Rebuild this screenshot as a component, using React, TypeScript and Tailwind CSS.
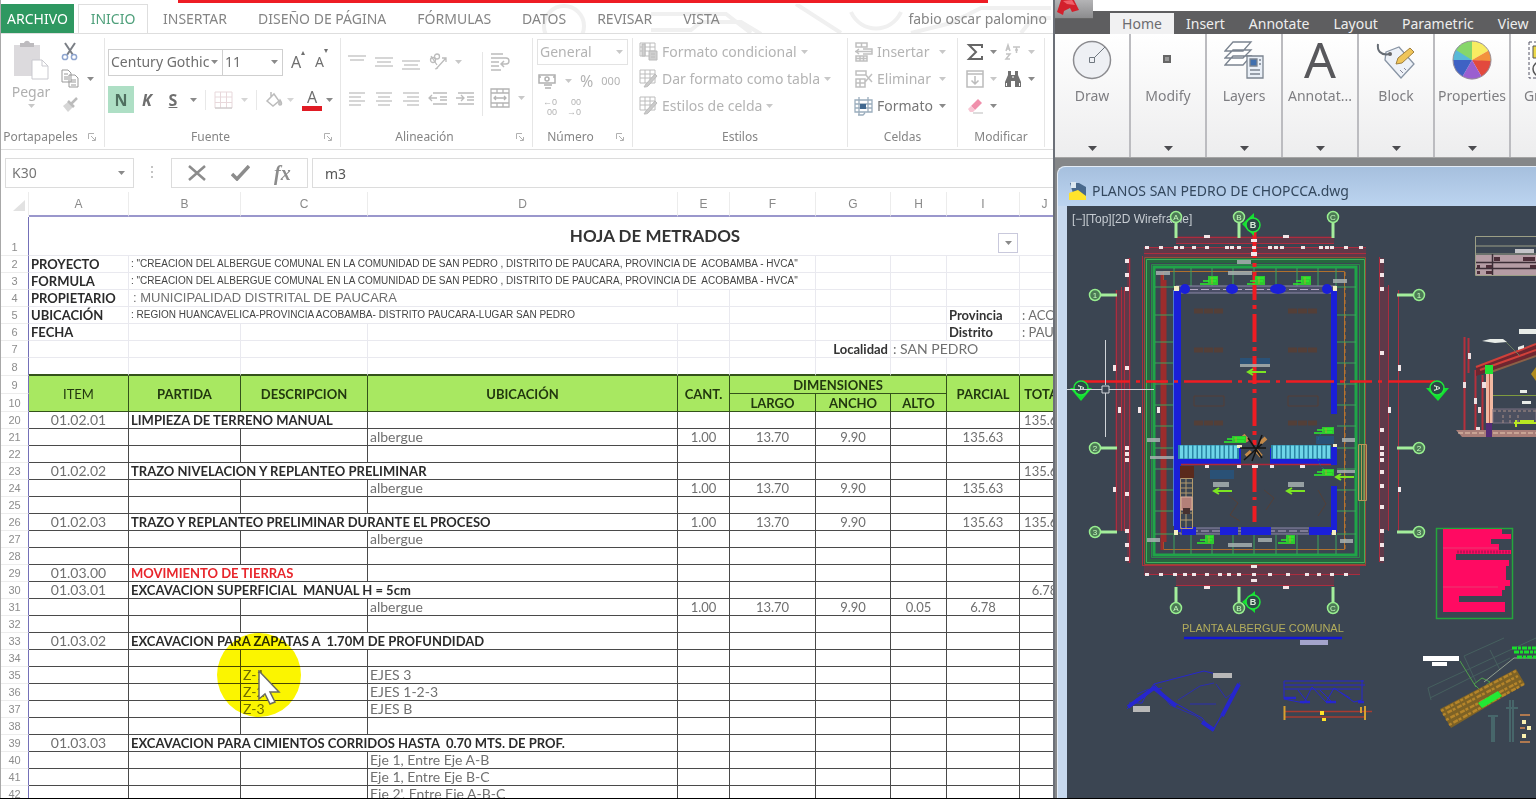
import type { ReactNode } from "react";

const TABS = ["INSERTAR", "DISEÑO DE PÁGINA", "FÓRMULAS", "DATOS", "REVISAR", "VISTA"];

const COLUMNS = ["A", "B", "C", "D", "E", "F", "G", "H", "I", "J", "K"];

type Row = {
  n: number;
  item?: string;
  title?: string;
  span?: number;
  red?: boolean;
  desc?: string;
  place?: string;
  nums?: string[];
  total?: string;
};

const ROWS: Row[] = [
  { n: 20, item: "01.02.01", title: "LIMPIEZA DE TERRENO MANUAL", span: 2, total: "135.63" },
  { n: 21, place: "albergue", nums: ["1.00", "13.70", "9.90", "", "135.63"] },
  { n: 22 },
  { n: 23, item: "01.02.02", title: "TRAZO NIVELACION Y REPLANTEO PRELIMINAR", span: 3, total: "135.63" },
  { n: 24, place: "albergue", nums: ["1.00", "13.70", "9.90", "", "135.63"] },
  { n: 25 },
  {
    n: 26,
    item: "01.02.03",
    title: "TRAZO Y REPLANTEO PRELIMINAR DURANTE EL PROCESO",
    span: 3,
    nums: ["1.00", "13.70", "9.90", "", "135.63"],
    total: "135.63",
  },
  { n: 27, place: "albergue" },
  { n: 28 },
  { n: 29, item: "01.03.00", title: "MOVIMIENTO DE TIERRAS", span: 2, red: true },
  { n: 30, item: "01.03.01", title: "EXCAVACION SUPERFICIAL\u00a0 MANUAL H = 5cm", span: 3, total: "6.78" },
  { n: 31, place: "albergue", nums: ["1.00", "13.70", "9.90", "0.05", "6.78"] },
  { n: 32 },
  { n: 33, item: "01.03.02", title: "EXCAVACION PARA ZAPATAS A\u00a0 1.70M DE PROFUNDIDAD", span: 3 },
  { n: 34 },
  { n: 35, desc: "Z-1", place: "EJES 3" },
  { n: 36, desc: "Z-2", place: "EJES 1-2-3" },
  { n: 37, desc: "Z-3", place: "EJES B" },
  { n: 38 },
  { n: 39, item: "01.03.03", title: "EXCAVACION PARA CIMIENTOS CORRIDOS HASTA\u00a0 0.70 MTS. DE PROF.", span: 3 },
  { n: 40, place: "Eje 1, Entre Eje A-B" },
  { n: 41, place: "Eje 1, Entre Eje B-C" },
  { n: 42, place: "Eje 2', Entre Eje A-B-C" },
];

function Caret({ className = "text-[#8a8a8a]" }: { className?: string }) {
  return (
    <svg width="7" height="4" viewBox="0 0 7 4" className={`shrink-0 ${className}`} aria-hidden="true">
      <path d="M0 0h7L3.500 4z" fill="currentColor" />
    </svg>
  );
}

function Group({
  label,
  className,
  launcher = false,
  children,
}: {
  label: string;
  className: string;
  launcher?: boolean;
  children: ReactNode;
}) {
  return (
    <section className={`flex shrink-0 flex-col border-r border-[#e6e6e6] ${className}`}>
      <div className="min-h-0 flex-1">{children}</div>
      <div className="relative h-5 text-center text-xs leading-5 text-[#858585]">
        {label}
        {launcher && (
          <svg className="absolute right-2 top-1.5" width="8" height="8" viewBox="0 0 8 8" fill="none" stroke="#b0b0b0">
            <path d="M.5 6V.5H6M3 3l4 4M7.500 4v3.500H4" />
          </svg>
        )}
      </div>
    </section>
  );
}

function Lines({ rows, stroke = "#c0c0c0" }: { rows: [number, number, number][]; stroke?: string }) {
  return (
    <svg width="20" height="20" viewBox="0 0 20 20" stroke={stroke} strokeWidth="1.300">
      {rows.map(([y, a, b]) => (
        <path key={y} d={`M${a} ${y}H${b}`} />
      ))}
    </svg>
  );
}

function Ribbon() {
  return (
    <div className="flex h-[116px] overflow-hidden border-b border-[#dedede] pb-0.5 pt-1">
      <Group label="Portapapeles" launcher className="w-[104px] [&>div:last-child]:pr-6">
        <div className="flex h-full gap-2 pl-2.5">
          <button className="flex w-10 flex-col items-center text-sm text-[#b0b0b0]">
            <svg width="36" height="42" viewBox="0 0 36 42" fill="none">
              <path d="M1 7h26v31H1z" fill="#dcdadd" />
              <path d="M7 9V5h4c1-3 5-3 6 0h4v4z" fill="#bdbbbe" />
              <path d="M19 22h10l6 6v13H19z" fill="#fff" stroke="#c9c9cf" />
              <path d="M29 22v6h6" stroke="#c9c9cf" />
            </svg>
            <span className="leading-6">Pegar</span>
            <Caret className="text-[#c8c8c8]" />
          </button>
          <div className="flex flex-col gap-2 pt-1">
            <button aria-label="Cortar" className="pl-0.5">
              <svg width="18" height="19" viewBox="0 0 18 19" fill="none">
                <path d="M4 1l8 12M14 1L6 13" stroke="#7b7f86" strokeWidth="2" />
                <circle cx="4" cy="15" r="2.600" stroke="#8fa5cf" strokeWidth="1.500" />
                <circle cx="13" cy="15" r="2.600" stroke="#8fa5cf" strokeWidth="1.500" />
              </svg>
            </button>
            <button aria-label="Copiar" className="flex items-center gap-2 pl-0.5">
              <svg width="18" height="19" viewBox="0 0 18 19" fill="#fff" stroke="#999">
                <path d="M1 1h6l3 3v9H1zM8 6h6l3 3v9H8z" />
                <path d="M3 5h4M3 8h4M3 10h4M10 11h5M10 13h5M10 16h5" />
              </svg>
              <Caret />
            </button>
            <button aria-label="Copiar formato" className="pl-0.5">
              <svg width="18" height="17" viewBox="0 0 18 17">
                <path d="M2 10l6-5 5 5-6 6z" fill="#d6d6d6" />
                <path d="M7 5l6 6M10 8l6-6" stroke="#bbb" strokeWidth="2.500" />
              </svg>
            </button>
          </div>
        </div>
      </Group>

      <Group label="Fuente" launcher className="w-[236px] [&>div:last-child]:pr-6">
        <div className="flex flex-col gap-2.5 pl-[3px] pt-2.5 text-[#6f6f6f]">
          <div className="flex items-center">
            <div className="relative flex h-[27px] w-[115px] items-center border border-[#cfcfcf]">
              <select aria-label="Fuente" className="w-full appearance-none pl-0.5 text-sm outline-none">
                <option>Century Gothic</option>
              </select>
              <Caret className="absolute right-1 text-[#8a8a8a]" />
            </div>
            <div className="relative flex h-[27px] w-[60px] items-center border border-l-0 border-[#cfcfcf]">
              <select aria-label="Tamaño" className="w-full appearance-none pl-0.5 text-sm outline-none">
                <option>11</option>
              </select>
              <Caret className="absolute right-1 text-[#8a8a8a]" />
            </div>
            <button className="ml-2 flex w-6 text-base">
              A<sup className="text-[8px] leading-3">▴</sup>
            </button>
            <button className="flex w-6 text-sm leading-7">
              A<sup className="text-[8px] leading-3">▾</sup>
            </button>
          </div>
          <div className="flex h-[27px] items-center">
            <button className="h-[27px] w-[26px] bg-[#aedfc5] text-base font-bold text-[#4f6f5f]">N</button>
            <button className="w-[26px] text-base font-bold italic">K</button>
            <button className="w-[26px] text-base font-bold underline">S</button>
            <Caret className="ml-1 text-[#8a8a8a]" />
            <span className="mx-2 h-5 w-px bg-[#e8e8e8]" />
            <svg width="19" height="18" viewBox="0 0 19 18" fill="none" stroke="#e8d8db">
              <path d="M1 1h17v16H1zM6.500 1v16M12.500 1v16M1 6h17M1 11.500h17" />
              <path d="M1 17h17" stroke="#c4c4c4" />
            </svg>
            <Caret className="ml-2 text-[#d5d5d5]" />
            <span className="mx-2 h-5 w-px bg-[#e8e8e8]" />
            <svg width="18" height="18" viewBox="0 0 18 18" fill="none" stroke="#bcbcbc" strokeWidth="1.500">
              <path d="M2 10l7-7 5 7-6 5zM6 6V1" />
              <path d="M15 9c2 3 2 5 0 5s-1-3 0-5z" fill="#ccc" />
            </svg>
            <Caret className="ml-1 text-[#d5d5d5]" />
            <button aria-label="Color de fuente" className="ml-2 flex w-5 flex-col items-center leading-none">
              <span className="text-base leading-[17px]">A</span>
              <span className="h-[5px] w-5 bg-[#e01b24]" />
            </button>
            <Caret className="ml-1 text-[#8a8a8a]" />
          </div>
        </div>
      </Group>

      <Group label="Alineación" launcher className="w-[192px] [&>div:last-child]:pr-6">
        <div className="flex h-full pl-1.5 pt-3.5">
          <div className="flex h-[64px] w-[136px] flex-col gap-4 border-r border-[#e6e6e6]">
            <div className="flex items-center gap-[7px]">
              <Lines rows={[[4, 1, 19], [8, 3, 17]]} />
              <Lines rows={[[6, 1, 19], [10, 3, 17], [14, 1, 19]]} />
              <Lines rows={[[9, 1, 19], [13, 3, 17], [17, 1, 19]]} />
              <svg width="20" height="20" viewBox="0 0 20 20" fill="none" stroke="#bcbcbc" strokeWidth="1.300">
                <circle cx="5" cy="8" r="2.500" />
                <circle cx="9" cy="4.500" r="2.500" />
                <path d="M3 4l6 9M8 17L18 6M18 10V6h-4M7 17l3-1" />
              </svg>
              <Caret className="text-[#c8c8c8]" />
            </div>
            <div className="flex items-center gap-[7px]">
              <Lines rows={[[5, 2, 18], [9, 2, 14], [13, 2, 18], [17, 2, 14]]} />
              <Lines rows={[[5, 2, 18], [9, 4, 16], [13, 2, 18], [17, 4, 16]]} />
              <Lines rows={[[5, 2, 18], [9, 6, 18], [13, 2, 18], [17, 6, 18]]} />
              <svg width="20" height="20" viewBox="0 0 20 20" fill="none" stroke="#bcbcbc" strokeWidth="1.300">
                <path d="M1 10h8M4 7l-3 3 3 3M5 5h14M12 9h7M12 12h7M5 16h14" />
              </svg>
              <svg width="20" height="20" viewBox="0 0 20 20" fill="none" stroke="#bcbcbc" strokeWidth="1.300">
                <path d="M1 10h8M6 7l3 3-3 3M3 5h16M12 9h7M12 12h7M3 16h16" />
              </svg>
            </div>
          </div>
          <div className="flex flex-col gap-4 pl-[7px]">
            <svg width="20" height="20" viewBox="0 0 20 20" fill="none" stroke="#bcbcbc" strokeWidth="1.500">
              <path d="M1 2h12M1 6h15c4 0 4 6 0 6h-4M14 9l-3 3 3 3M1 10h8M1 14h8M1 18h10" />
            </svg>
            <div className="flex items-center gap-2">
              <svg width="20" height="20" viewBox="0 0 20 20" fill="none" stroke="#b4b4b4" strokeWidth="1.300">
                <path d="M1 1h18v18H1zM1 5h18M1 15h18M7 1v4M13 1v4M7 15v4M13 15v4M4 10h12M6 8l-2 2 2 2M14 8l2 2-2 2" />
              </svg>
              <Caret className="text-[#c8c8c8]" />
            </div>
          </div>
        </div>
      </Group>

      <Group label="Número" launcher className="w-[100px] [&>div:last-child]:pr-6">
        <div className="flex flex-col gap-1 pl-1 pt-px text-[#b4b4b4]">
          <div className="relative flex h-[26px] w-[91px] items-center border border-[#e3e3e3]">
            <select aria-label="Formato de número" className="w-full appearance-none pl-0.5 text-sm outline-none">
              <option>General</option>
            </select>
            <Caret className="absolute right-1 text-[#c8c8c8]" />
          </div>
          <div className="flex h-6 items-center gap-2">
            <svg width="20" height="17" viewBox="0 0 20 17" fill="none" stroke="#b0b0b0" strokeWidth="1.500">
              <path d="M2 2h16v8H2zM2 4h2M16 4h2M7 12h8M8 15h6" />
              <circle cx="10" cy="6" r="2" />
            </svg>
            <Caret className="text-[#c8c8c8]" />
            <span className="text-base leading-6">%</span>
            <span className="text-[11px]">000</span>
          </div>
          <div className="flex gap-2 pl-1 font-['Liberation_Sans'] text-[9px] leading-[10px]">
            <span className="w-4 text-right">←0<br />00</span>
            <span className="w-4 text-right">00<br />→0</span>
          </div>
        </div>
      </Group>

      <Group label="Estilos" className="w-[215px]">
        <div className="flex flex-col pl-1.5 text-sm text-[#b4b4b4]">
          {["Formato condicional", "Dar formato como tabla", "Estilos de celda"].map((t, i) => (
            <button key={t} className="flex h-[27px] items-center gap-1">
              <svg width="19" height="19" viewBox="0 0 19 19" fill="none" stroke="#bcbcbc">
                <path d="M1 1h15v13H1zM1 5h15M1 9h15M6 1v13M11 1v13" />
                {i === 0 ? (
                  <path d="M3 2h3v12H3zM10 9h8v9h-8zM12 12h4M12 15h4" fill="#cfcfcf" />
                ) : (
                  <path d="M7 15l9-10 2 2-8 9c-1 2-4 2-5 2z" fill="#cacaca" />
                )}
              </svg>
              {t}
              <Caret className="text-[#c8c8c8]" />
            </button>
          ))}
        </div>
      </Group>

      <Group label="Celdas" className="w-[110px]">
        <div className="flex flex-col pl-1.5 text-sm text-[#b4b4b4]">
          <button className="flex h-[27px] items-center gap-1">
            <svg width="19" height="20" viewBox="0 0 19 20" fill="none" stroke="#c0c0c0" strokeWidth="1.500">
              <path d="M2 1h11v4H2zM7.500 1v4M2 14h11v5H2zM6 14v5M9.500 14v5M2 16.500h11M1 9.500h17M5 7L2 9.500 5 12M9 7h9v5H9" />
            </svg>
            <span className="w-[58px] text-left">Insertar</span>
            <Caret className="text-[#c8c8c8]" />
          </button>
          <button className="flex h-[27px] items-center gap-1">
            <svg width="19" height="20" viewBox="0 0 19 20" fill="none" stroke="#c0c0c0" strokeWidth="1.500">
              <path d="M2 2h10v4H2zM2 10h9v8H2zM6 10v8M2 14h9M11 5l7 8M18 5l-7 8" />
            </svg>
            <span className="w-[58px] text-left">Eliminar</span>
            <Caret className="text-[#c8c8c8]" />
          </button>
          <button className="flex h-[27px] items-center gap-1 text-[#777]">
            <svg width="19" height="20" viewBox="0 0 19 20" fill="none" stroke="#9badbd" strokeWidth="1.300">
              <path d="M1 4h17v12H1zM5 1v18M14 1v15M1 8h17M1 12h17M4 19h5l2-2" />
              <path d="M6 8h6v5H6z" fill="#41688f" stroke="none" />
            </svg>
            <span className="w-[58px] text-left">Formato</span>
            <Caret />
          </button>
        </div>
      </Group>

      <Group label="Modificar" className="w-[87px]">
        <div className="grid grid-cols-[38px_40px] pl-2 [&>button]:flex [&>button]:h-[27px] [&>button]:items-center [&>button]:gap-1.5">
          <button aria-label="Autosuma">
            <svg width="18" height="18" viewBox="0 0 18 18" fill="none" stroke="#666" strokeWidth="2">
              <path d="M16 5V2H3l7 7-7 7h13v-3" />
            </svg>
            <Caret />
          </button>
          <button aria-label="Ordenar y filtrar">
            <svg width="18" height="18" viewBox="0 0 18 18" fill="none" stroke="#c4c4c4" strokeWidth="1.500">
              <path d="M2 8l2-6 2 6M3 6h3M2 11h4l-4 5h4M9 4h7M11 7h3M12.500 4v6" />
            </svg>
            <Caret className="text-[#c8c8c8]" />
          </button>
          <button aria-label="Rellenar">
            <svg width="18" height="18" viewBox="0 0 18 18" fill="none" stroke="#bcbcbc" strokeWidth="1.500">
              <path d="M1 1h16v16H1zM1 4h16M9 6v8M5.500 10.500L9 14l3.500-3.500" />
            </svg>
            <Caret className="text-[#c8c8c8]" />
          </button>
          <button aria-label="Buscar">
            <svg width="18" height="18" viewBox="0 0 18 18" fill="#707070">
              <path d="M4 1h3v4h4V1h3v4l3 7v5h-6v-6H7v6H1v-5l3-7z" />
              <path d="M2.500 13v3M15.500 13v3M9 6v2" stroke="#fff" />
            </svg>
            <Caret />
          </button>
          <button aria-label="Borrar">
            <svg width="18" height="18" viewBox="0 0 18 18">
              <path d="M5 9l7-7 4 4-7 7z" fill="#f08fab" />
              <path d="M5 9l4 4-2 2H4l-2-3z" fill="#f8c6d4" />
              <path d="M7 16h10" stroke="#bbb" />
            </svg>
            <Caret />
          </button>
        </div>
      </Group>
    </div>
  );
}

const soft = "border-b border-r border-[#e9e9ef]";
const cell = "border-b border-r border-[#4a4a4a]";
const head = "border-b border-r border-[#33521a] bg-[#a8e861] font-bold text-[#22380f]";

function Blank({ count }: { count: number }) {
  return (
    <>
      {Array.from({ length: count }, (_, i) => (
        <td key={i} className={soft} />
      ))}
    </>
  );
}

function RowNo({ n, className = "" }: { n: number; className?: string }) {
  return (
    <th
      scope="row"
      className={`border-b border-r border-b-[#ececec] border-r-[#7470b8] text-center font-['Liberation_Sans'] text-[11px] font-normal text-[#8d8d8d] ${className}`}
    >
      {n}
    </th>
  );
}

function Sheet() {
  return (
    <div className="relative min-h-0 flex-1 overflow-hidden">
      <table className="w-[1280px] table-fixed border-separate border-spacing-0 whitespace-nowrap font-['Lato',sans-serif] text-[13px] leading-4 text-[#707070] [&_td]:p-0 [&_th]:p-0">
        <colgroup>
          <col className="w-[28px]" />
          <col className="w-[100px]" />
          <col className="w-[112px]" />
          <col className="w-[127px]" />
          <col className="w-[310px]" />
          <col className="w-[52px]" />
          <col className="w-[86px]" />
          <col className="w-[75px]" />
          <col className="w-[56px]" />
          <col className="w-[73px]" />
          <col className="w-[50px]" />
          <col className="w-[211px]" />
        </colgroup>
        <thead>
          <tr className="h-[25px] font-['Liberation_Sans'] text-xs text-[#8a8a8a] [&>th]:border-b-2 [&>th]:border-r [&>th]:border-b-[#9a97cc] [&>th]:border-r-[#ececec]">
            <th className="border-b-transparent! align-bottom">
              <svg className="mb-1 ml-3" width="12" height="11" viewBox="0 0 12 11">
                <path d="M12 0v11H0z" fill="#e2e2e2" />
              </svg>
            </th>
            {COLUMNS.map((c) => (
              <th key={c} scope="col" className="font-normal">
                {c}
              </th>
            ))}
          </tr>
        </thead>
        <tbody>
          <tr className="h-[39px]">
            <RowNo n={1} className="align-bottom" />
            <td colSpan={11} className="relative border-b border-[#e9e9ef] text-center text-[17px] font-bold text-[#333]">
              HOJA DE METRADOS
              <button
                aria-label="Filtrar"
                className="absolute left-[969px] top-4 flex size-5 items-center justify-center border border-[#c9c9dc] bg-white"
              >
                <Caret />
              </button>
            </td>
          </tr>
          {[
            { n: 2, k: "PROYECTO" },
            { n: 3, k: "FORMULA" },
          ].map(({ n, k }) => (
            <tr key={n} className="h-[17px]">
              <RowNo n={n} />
              <td className={`${soft} font-bold text-[#2b2b2b]`}>
                <span className="pl-0.5">{k}</span>
              </td>
              <td colSpan={5} className={`${soft} font-['Liberation_Sans'] text-[10px] text-[#444]`}>
                <span className="pl-0.5">
                  : "CREACION DEL ALBERGUE COMUNAL EN LA COMUNIDAD DE SAN PEDRO , DISTRITO DE PAUCARA, PROVINCIA DE&nbsp;
                  ACOBAMBA - HVCA"
                </span>
              </td>
              <Blank count={5} />
            </tr>
          ))}
          <tr className="h-[17px]">
            <RowNo n={4} />
            <td className={`${soft} font-bold text-[#2b2b2b]`}>
              <span className="pl-0.5">PROPIETARIO</span>
            </td>
            <td colSpan={3} className={`${soft} font-['Liberation_Sans']`}>
              <span className="pl-1">: MUNICIPALIDAD DISTRITAL DE PAUCARA</span>
            </td>
            <Blank count={7} />
          </tr>
          <tr className="h-[17px]">
            <RowNo n={5} />
            <td className={`${soft} font-bold text-[#2b2b2b]`}>
              <span className="pl-0.5">UBICACIÓN</span>
            </td>
            <td colSpan={4} className={`${soft} font-['Liberation_Sans'] text-[10px] text-[#444]`}>
              <span className="pl-0.5">: REGION HUANCAVELICA-PROVINCIA ACOBAMBA- DISTRITO PAUCARA-LUGAR SAN PEDRO</span>
            </td>
            <Blank count={3} />
            <td className={`${soft} font-bold text-[#333]`}>
              <span className="pl-0.5">Provincia</span>
            </td>
            <td colSpan={2} className="border-b border-[#e9e9ef]">
              <span className="pl-0.5">: ACOBAMBA</span>
            </td>
          </tr>
          <tr className="h-[17px]">
            <RowNo n={6} />
            <td className={`${soft} font-bold text-[#2b2b2b]`}>
              <span className="pl-0.5">FECHA</span>
            </td>
            <Blank count={7} />
            <td className={`${soft} font-bold text-[#333]`}>
              <span className="pl-0.5">Distrito</span>
            </td>
            <td colSpan={2} className="border-b border-[#e9e9ef]">
              <span className="pl-0.5">: PAUCARA</span>
            </td>
          </tr>
          <tr className="h-[17px]">
            <RowNo n={7} />
            <Blank count={6} />
            <td className={`${soft} text-right font-bold text-[#333]`}>
              <span className="pr-0.5">Localidad</span>
            </td>
            <td colSpan={2} className={`${soft} text-sm leading-4`}>
              <span className="pl-0.5">: SAN PEDRO</span>
            </td>
            <Blank count={2} />
          </tr>
          <tr className="h-[18px] [&>td]:border-b-2 [&>td]:border-b-[#33521a]">
            <RowNo n={8} />
            <Blank count={11} />
          </tr>
          <tr className="h-[18px]">
            <RowNo n={9} />
            <td rowSpan={2} className={`${head} text-center font-normal!`}>ITEM</td>
            <th rowSpan={2} className={head}>PARTIDA</th>
            <th rowSpan={2} className={head}>DESCRIPCION</th>
            <th rowSpan={2} className={head}>UBICACIÓN</th>
            <th rowSpan={2} className={head}>CANT.</th>
            <th colSpan={3} className={head}>DIMENSIONES</th>
            <th rowSpan={2} className={head}>PARCIAL</th>
            <th rowSpan={2} className={head}>TOTAL</th>
            <th rowSpan={2} className={head} />
          </tr>
          <tr className="h-[18px]">
            <RowNo n={10} />
            <th className={head}>LARGO</th>
            <th className={head}>ANCHO</th>
            <th className={head}>ALTO</th>
          </tr>
          {ROWS.map((r) => (
            <tr key={r.n} className="h-[17px]">
              <RowNo n={r.n} />
              <td className={`${cell} text-center text-sm leading-4`}>{r.item}</td>
              {r.title ? (
                <td
                  colSpan={r.span}
                  className={`${cell} font-bold ${r.red ? "text-[#e8262c]" : "text-[#2b2b2b]"}`}
                >
                  <span className="pl-0.5">{r.title}</span>
                </td>
              ) : (
                <>
                  <td className={cell} />
                  <td className={`${cell} text-sm leading-4`}>
                    <span className="pl-0.5">{r.desc}</span>
                  </td>
                </>
              )}
              {r.span !== 3 && (
                <td className={`${cell} text-sm leading-4`}>
                  <span className="pl-0.5">{r.place}</span>
                </td>
              )}
              {[0, 1, 2, 3, 4].map((i) => (
                <td key={i} className={`${cell} text-center`}>
                  {r.nums?.[i]}
                </td>
              ))}
              <td className={`${cell} text-center`}>{r.total}</td>
              <td className={cell} />
            </tr>
          ))}
        </tbody>
      </table>
      {/* click highlight and pointer */}
      <div className="absolute left-[216px] top-[441px] size-[84px] rounded-full bg-[#fbf500] mix-blend-multiply" />
      <svg className="absolute left-[257px] top-[478px]" width="24" height="36" viewBox="0 0 24 36">
        <path d="M1 1v28l6-5 5 10 5-2-5-10h9z" fill="#fff" stroke="#6b6b60" strokeWidth="1.500" />
      </svg>
    </div>
  );
}

function Excel() {
  return (
    <main className="flex min-w-0 flex-col overflow-hidden border-l border-[#a8a8a8] bg-white">
      <div className="flex h-1 shrink-0">
        <div className="ml-[177px] h-[3px] w-[810px] bg-[#ee1c24]" />
      </div>
      <div className="relative flex h-[30px] shrink-0 items-center overflow-hidden border-b border-[#dedede] text-sm text-[#858585]">
        <svg className="absolute left-[530px] top-0" width="520" height="30" viewBox="0 0 520 30" fill="none" stroke="#f0f0f0" strokeWidth="4">
          <circle cx="33" cy="22" r="20" />
          <path d="M120 10h75l25 19M120 26h40l10-8h40l20 12M265 0l45 29M320 8c10 22 40 22 50 0M380 29l40-10 30-15h70M490 29l12-15h20" />
        </svg>
        <button className="relative h-[30px] w-[73px] bg-[#2e9861] text-white">ARCHIVO</button>
        <button className="relative ml-1 mr-[15px] h-[30px] w-[70px] border-x border-t border-[#dedede] bg-white text-[#4fa07b]">
          INICIO
        </button>
        <nav className="relative flex gap-[31px]">
          {TABS.map((t) => (
            <button key={t}>{t}</button>
          ))}
        </nav>
        <span className="relative ml-auto pr-1.5">fabio oscar palomino</span>
      </div>
      <div className="shrink-0">
        <Ribbon />
      </div>
      <div className="flex h-[42px] shrink-0 items-center pl-1 pt-1 text-sm text-[#777]">
        <div className="flex h-[30px] w-[129px] items-center border border-[#dcdcdc] pl-1.5 pr-2">
          <input aria-label="Cuadro de nombres" defaultValue="K30" className="w-full outline-none" />
          <Caret />
        </div>
        <svg className="mx-4" width="5" height="14" viewBox="0 0 5 14" fill="#c4c4c4">
          <path d="M1 0h2v2H1zM1 5h2v2H1zM1 10h2v2H1z" />
        </svg>
        <div className="flex h-[30px] w-[137px] items-center justify-around border border-[#dcdcdc] px-1">
          <svg width="18" height="16" viewBox="0 0 18 16" stroke="#8c8c8c" strokeWidth="2.500">
            <path d="M1 1l16 14M17 1L1 15" />
          </svg>
          <svg width="19" height="16" viewBox="0 0 19 16" fill="none" stroke="#8c8c8c" strokeWidth="3.500">
            <path d="M1 9l5 5L18 1" />
          </svg>
          <button className="font-['Liberation_Serif'] text-xl font-bold italic leading-6 text-[#8c8c8c]">
            fx
          </button>
        </div>
        <input
          aria-label="Barra de fórmulas"
          defaultValue="m3"
          className="ml-1 h-[30px] min-w-0 flex-1 border-y border-l border-[#dcdcdc] pl-3 text-[#555] outline-none"
        />
      </div>
      <Sheet />
    </main>
  );
}

/* ---------- drawing canvas ---------- */

const H_TICKS = [287, 315, 342, 363, 384, 405, 426, 448, 469, 490, 511, 534];
const V_TICKS = [1174, 1191, 1212, 1233, 1254, 1276, 1297, 1318, 1336];

// [x, y, w, h] of the dimension labels
const DIMS: number[][] = [
  ...[1147, 1161, 1176, 1182, 1194, 1207, 1227, 1232, 1239, 1254, 1270, 1276, 1282, 1303, 1321, 1327, 1332, 1346, 1361].map((x) => [x - 2, 246, 4, 3]),
  ...[1147, 1161, 1175, 1185, 1194, 1207, 1220, 1229, 1239, 1254, 1270, 1288, 1307, 1319, 1332, 1346].map((x) => [x - 2, 573, 4, 3]),
  ...[1207, 1286].map((x) => [x - 3, 235, 6, 3]),
  ...[1207, 1286].map((x) => [x - 3, 586, 6, 3]),
  [1251, 239, 6, 3], [1251, 252, 6, 4], [1251, 565, 6, 3], [1251, 579, 6, 3],
  ...[261, 275, 289, 368, 448, 454, 460, 494, 531, 545, 559].map((y) => [1125, y - 2, 4, 4]),
  ...[261, 275, 289, 353, 430, 448, 454, 460, 472, 486, 507, 531, 545, 559].map((y) => [1380, y - 2, 4, 4]),
  [1113, 365, 3, 6], [1118, 407, 3, 6], [1138, 407, 3, 6], [1157, 407, 3, 6], [1113, 487, 3, 5],
  [1398, 365, 3, 6], [1388, 407, 3, 6], [1398, 487, 3, 5],
  [1205, 465, 4, 3], [1237, 465, 4, 3], [1252, 465, 6, 3], [1270, 465, 4, 3], [1300, 465, 5, 3],
];

const LABELS: number[][] = [
  [1156, 271, 14, 4], [1237, 260, 14, 4], [1228, 271, 24, 4], [1333, 279, 14, 4], [1147, 438, 13, 4],
  [1150, 456, 24, 3], [1342, 438, 13, 4], [1337, 470, 18, 3], [1147, 538, 13, 4], [1258, 538, 14, 4],
  [1228, 543, 24, 4], [1340, 539, 13, 4], [1213, 482, 16, 5], [1288, 482, 16, 5], [1240, 364, 30, 3],
];

const GREENS: number[][] = [
  [1208, 276, 10, 9], [1255, 276, 10, 9], [1301, 276, 10, 9], [1205, 535, 9, 9], [1286, 535, 9, 9],
  [1232, 436, 14, 7], [1322, 427, 12, 7], [1322, 469, 12, 7],
];

function Bubble({ x, y, dx = 0, dy = 0, t }: { x: number; y: number; dx?: number; dy?: number; t: string }) {
  return (
    <g>
      <path d={`M${x + dx * 5} ${y + dy * 5}L${x + dx * 22} ${y + dy * 21}`} stroke="#a4ee9c" strokeWidth="3" />
      <circle cx={x} cy={y} r="5.500" fill="#4c7a55" stroke="#98ee90" strokeWidth="1.500" />
      <text x={x} y={y + 3} textAnchor="middle" fontSize="8" fill="#c8ffc0">
        {t}
      </text>
    </g>
  );
}

function Plan() {
  return (
    <g fill="none">
      {/* dimension strings */}
      <g fill="#7d2f42" opacity=".55">
        <path d="M1115 290h15v241h-15zM1127 258h4v305h-4zM1144 247h222v10h-222zM1176 236h158v8h-158zM1144 565h216v10h-216zM1176 575h158v10h-158zM1380 258h4v305h-4zM1384 287h5v243h-5z" />
      </g>
      <path
        stroke="#ad2c3e"
        d="M1116.500 290v241M1121.500 287v244M1124.500 287v244M1129.500 258v305M1379.500 257v305M1388.500 285v246M1398.500 290v241M1144 247.500h222M1144 253.500h222M1176 237.500h158M1176 243.500h158M1142.500 256v310M1142 565.500h224M1144 574.500h216M1176 585.500h158"
      />
      {/* sidewalk */}
      <path d="M1144.500 257.500h221v307h-221z" stroke="#9a4a35" />
      <path d="M1147.500 260.500h215v301h-215z" stroke="#27663f" strokeWidth="5" />
      <path d="M1146.500 259.500h218v303h-218z" stroke="#3fae5b" />
      <path d="M1154 267h202v288h-202z" stroke="#1fa548" strokeWidth="3" />
      <path d="M1151.500 264.500h208v293h-208z" stroke="#2a8a48" />
      <path d="M1163.500 271.500h181v278h-181z" stroke="#b0702c" />
      <path d="M1162 272v278M1165 280v262" stroke="#9c2c2c" strokeWidth="3" />
      <path d="M1345 272v278" stroke="#c2762e" strokeDasharray="4 3" />
      {H_TICKS.map((y) => (
        <path key={y} d={`M1155 ${y}h20M1337 ${y}h19`} stroke="#3da35c" />
      ))}
      {V_TICKS.map((x) => (
        <path key={x} d={`M${x} 268v19M${x} 535v19`} stroke="#3da35c" />
      ))}
      {/* walls */}
      <path d="M1176 286h160v7h-160zM1180 528h155v6h-155z" fill="#4b4e66" stroke="#8c88a8" />
      <path d="M1190 289.500h130M1190 531h130" stroke="#b5a9c4" strokeDasharray="8 3" />
      <g fill="#1a1fd8">
        <path d="M1174 290h7v242h-7zM1331 290h6v124h-6zM1331 486h6v46h-6zM1174 459h67v6h-67zM1270 459h67v6h-67zM1182 527h14v8h-14zM1220 527h18v8h-18zM1241 527h30v8h-30zM1309 527h22v8h-22zM1236 448h5v12h-5zM1270 448h5v12h-5zM1330 447h7v14h-7z" />
        <ellipse cx="1185" cy="289" rx="5" ry="5" />
        <ellipse cx="1232" cy="289" rx="6" ry="5" />
        <ellipse cx="1278" cy="289" rx="8" ry="5" />
        <ellipse cx="1327" cy="289" rx="5" ry="5" />
      </g>
      <path d="M1173.500 290v236" stroke="#4a7ad0" />
      <path d="M1178 445h61v14h-61zM1271 445h60v14h-60z" fill="#2b87a5" />
      <path d="M1180 452h58M1273 452h57" stroke="#6fd6e8" strokeWidth="13" strokeDasharray="3 1.500" />
      <path d="M1181 464.500h150" stroke="#b02838" strokeWidth="1.500" />
      <path d="M1174 286h5v5h-5zM1333 286h4v5h-4zM1174 530h4v5h-4zM1332 530h4v5h-4zM1237 445h5v3h-5zM1333 444h4v3h-4z" fill="#f4efc0" />
      {/* counter and porch */}
      <path d="M1180 466h14v12h-14z" fill="#5a2a1c" />
      <path d="M1180.500 478.500h12v50h-12zM1186 478v50M1180 483h12M1180 488h12M1180 493h12M1180 513h12M1180 520h12" stroke="#b39a6c" />
      <path d="M1181 497h11v13h-11z" fill="#b38078" stroke="#d9b0a0" />
      <path d="M1183 508h7v6h-7z" fill="#46302f" />
      <path d="M1358.500 444.500h8v56h-8zM1361.500 444v56M1364 444v56" stroke="#b8955a" />
      {/* faint furniture */}
      <g stroke="#5e3d2e" strokeWidth="5" opacity=".7" strokeDasharray="9 1">
        <path d="M1194 311h30M1194 350h30M1194 423h30M1288 311h30M1288 350h30M1288 423h30" />
      </g>
      <g stroke="#6b3a1c" opacity=".5">
        <path d="M1228 495l10 8-8 12 10 6M1264 490l10 8-8 12M1318 490l8 14-8 12M1288 396h30v10h-30zM1194 396h30v10h-30z" />
      </g>
      <path d="M1240 358h30v6h-30zM1210 470h24v9h-24zM1316 436h18v8h-18z" fill="#1f5a90" opacity=".6" />
      <path d="M1318 440a15 15 0 0 1 13-12M1318 458a15 15 0 0 0 13 14" stroke="#2a5f96" strokeDasharray="3 2" />
      {/* axes */}
      <path d="M1254.500 230v215" stroke="#f01c22" strokeWidth="4" strokeDasharray="28 5 4 5" />
      <path d="M1254.500 468v54" stroke="#f01c22" strokeWidth="4" strokeDasharray="24 5 3 6" />
      <path d="M1082 381.500h353" stroke="#f01c22" strokeWidth="2.500" strokeDasharray="48 6 4 6 22 6 4 6" />
      {/* ladder symbol */}
      <path d="M1243 435l24 28M1266 438l-20 18" stroke="#c48a4a" strokeWidth="4" strokeDasharray="8 12" />
      <path d="M1248 438l14 20M1262 435l-10 26M1240 448h26M1244 460l18-16" stroke="#141414" strokeWidth="1.500" />
      {GREENS.map(([x, y, w, h]) => (
        <g key={`${x}-${y}`}>
          <path d={`M${x} ${y}h${w}v${h}h${-w}z`} fill="#2fc92f" />
          <path d={`M${x - 8} ${y + h - 1}h8M${x - 5} ${y + h - 4}h6M${x + 2} ${y + 2}h${w - 3}M${x + 3} ${y + 5}h${w - 5}`} stroke="#2bf02b" strokeWidth="1.500" />
          <path d={`M${x + 4} ${y + 1}v${h - 2}`} stroke="#a8a030" />
        </g>
      ))}
      {[[1248, 372], [1214, 491], [1287, 491], [1336, 477]].map(([x, y]) => (
        <path key={`${x}-${y}`} d={`M${x} ${y}h18M${x + 5} ${y - 3}l-5 3 5 3`} stroke="#7be622" strokeWidth="2" />
      ))}
      {LABELS.map(([x, y, w, h]) => (
        <rect key={`${x}-${y}`} x={x} y={y} width={w} height={h} fill="#a7b0b0" opacity=".85" />
      ))}
      {DIMS.map(([x, y, w, h]) => (
        <rect key={`${x}-${y}`} x={x} y={y} width={w} height={h} fill="#f4e6e8" />
      ))}
      {/* grid bubbles */}
      <Bubble x={1176} y={217} dy={1} t="A" />
      <Bubble x={1239} y={217} dy={1} t="B" />
      <Bubble x={1333} y={217} dy={1} t="C" />
      <Bubble x={1176} y={608} dy={-1} t="A" />
      <Bubble x={1239} y={608} dy={-1} t="B" />
      <Bubble x={1333} y={608} dy={-1} t="C" />
      <Bubble x={1095} y={295} dx={1} t="1" />
      <Bubble x={1095} y={448} dx={1} t="2" />
      <Bubble x={1095} y={532} dx={1} t="3" />
      <Bubble x={1419} y={295} dx={-1} t="1" />
      <Bubble x={1419} y={448} dx={-1} t="2" />
      <Bubble x={1419} y={532} dx={-1} t="3" />
      {/* section markers */}
      <path d="M1242 224l12-11v23zM1242 602l13-11v22zM1070 388h22l-11 13zM1426 388h23l-11 13z" fill="#12e030" />
      {[[1253, 225, "B"], [1253, 602, "B"], [1081, 388, "A"], [1437, 388, "A"]].map(([x, y, t]) => (
        <g key={`${x}-${y}`}>
          <circle cx={x} cy={y} r="7" fill="#2c4a46" stroke="#20e83c" strokeWidth="1.500" />
          <text
            x={x}
            y={Number(y) + 3}
            textAnchor="middle"
            fontSize="9"
            fontWeight="bold"
            fill="#d8e8d8"
            transform={t === "A" ? `rotate(90 ${x} ${y})` : undefined}
          >
            {t}
          </text>
        </g>
      ))}
      <path d="M1105.500 340v45M1105.500 393v44M1067 389.500h35M1109 389.500h45M1102 386h7v7h-7z" stroke="#d0d4d8" />
    </g>
  );
}

function Details() {
  return (
    <g fill="none">
      {/* opening schedule */}
      <path d="M1475.500 236.500h64v39h-64zM1475 246h64M1475 254h64" stroke="#9c9f86" />
      <path d="M1476 255h60v20h-60z" fill="#b59ca4" />
      <path d="M1476 262.500h60M1476 268.500h60M1492.500 254v21" stroke="#3b2d36" strokeWidth="1.500" />
      <path d="M1494 257h6v4h-6zM1523 257h12v4h-12zM1477 265h3v3h-3zM1486 265h6v3h-6zM1530 265h6v3h-6zM1477 271h3v3h-3zM1486 271h6v3h-6z" fill="#4d2f3a" />
      <path d="M1515 249h19v4h-19z" fill="#c4c4c8" />
      {/* cross section */}
      <path d="M1464.500 337v94M1468.500 338v35M1475.500 370v60M1482.500 375v55" stroke="#b5303c" strokeWidth="2" />
      <path d="M1476 367l60-23v12l-60 20z" fill="#6e2630" />
      <path d="M1476 367l60-23M1480 370l56-20" stroke="#d0403a" strokeWidth="2" />
      <path d="M1488 373l48-17" stroke="#8c6046" strokeWidth="2" />
      <path d="M1486 372h7v51h-7z" fill="#f2b9a2" />
      <path d="M1489.500 372v51" stroke="#b8604c" />
      <path d="M1485 365h8v9h-8z" fill="#22e034" />
      <path d="M1493 395.500h43" stroke="#7f9b3f" />
      <path d="M1493 409h43v14h-43z" fill="#4c5060" stroke="#7a7080" />
      <path d="M1493 411h43M1503 415v8M1510 415v8M1518 415v8" stroke="#a88f88" strokeDasharray="3 2" />
      <path d="M1456 430l6 7h74v-7z" fill="#a87e78" />
      <path d="M1458 433h78" stroke="#e8c8b0" strokeDasharray="5 2" />
      <path d="M1486 423h6v14h-6z" fill="#542c78" />
      <path d="M1514 423h22M1516 420v7M1520 421h14" stroke="#b8e822" strokeWidth="2" />
      <path d="M1531 374l5-7v14z" fill="#b08a1c" />
      <path d="M1482 341l8-2h13l4 3-12 1zM1519 329h17v5h-17zM1518 347l6-2v3l-6 2zM1520 390h7v3h-7zM1522 401h9v3h-9z" fill="#e8ece8" />
      <path d="M1506 342l14 14" stroke="#687a60" />
      <path d="M1468 353h3v6h-3zM1463 382h3v6h-3zM1474 398h3v6h-3zM1482 382h4v6h-4zM1478 407h3v6h-3zM1476 427h4v3h-4z" fill="#eedfe0" />
      {/* general notes */}
      <path d="M1436.500 528.500h76v90h-76z" stroke="#25a53c" strokeWidth="1.500" />
      <path
        d="M1443 529h59v5h9v5h-20v5h8v6h12v4h-55v6h53v6h-3v14h4v6h-5v4h-3v6h-43v6h46v10h-62z"
        fill="#ff0a62"
      />
      <path d="M1457 552h54" stroke="#c40f55" strokeWidth="3" strokeDasharray="2 1" />
      <path d="M1443 548h55M1443 587h55" stroke="#e83a70" />
      {/* drawing title */}
      <text x="1182" y="632" fontSize="11" fill="#b3ad5c">
        PLANTA ALBERGUE COMUNAL
      </text>
      <path d="M1184 638h158" stroke="#1418d4" strokeWidth="2.500" />
      <path d="M1300 640h28v5h-28z" fill="#a4a4cc" />
      {/* stair and roof sketches */}
      <g stroke="#2626cf">
        <path d="M1127 709l9-10 9-2 9-13 14 15 34 19 11 13 24-46M1154 684l50-13 12 3M1129 703h13l6-12 14-3" />
        <path d="M1154 684l16 21 26 11 16 14 10-14 18-34M1137 694l12-5M1178 700l22-14 14-3M1190 704h26M1216 684l10 14 8-6" opacity=".75" />
        <path d="M1128 707l26-19 22 18M1222 716l17-32M1202 722l12 8" strokeWidth="4" />
        <path d="M1284 681h80M1284 685h81M1284 689h76M1284 681v18l20 4 8-16 14 15 8-14 20 14 8-2v-20M1298 690l10 13M1320 690l12 12M1340 692l10 6" />
        <path d="M1284 698h12M1300 702h10M1326 702h10M1358 702h6" strokeWidth="2.500" />
      </g>
      <path d="M1133 706h17v6h-17zM1213 673h19v5h-19z" fill="#b8b8b8" />
      <path d="M1284 711.500h88M1284 717h82" stroke="#a83c30" strokeWidth="1.500" />
      <path d="M1284.500 706v14M1365 706v14M1361 707v6" stroke="#d8a030" strokeWidth="2" />
      <path d="M1320 711h4v4h-4zM1322 718h4v3h-4z" fill="#ffe22a" />
      {/* roof joint */}
      <path d="M1428 688l108-50M1430 698l80-40M1428 688l3 12M1464 656l40-18M1464 656l12 26M1490 650l10 20" stroke="#46605f" />
      <path d="M1460 661l16 26M1474 684l8-6 8 4-10 8z" stroke="#4fa04c" />
      <path d="M1484 682l30-24h22" stroke="#92a090" />
      <path d="M1440 709l76-40 9 15-74 44z" fill="#7d6226" />
      <path d="M1441 711l75-40M1443 715l75-39M1446 720l75-39M1449 725l75-41" stroke="#b5852a" strokeWidth="2.500" strokeDasharray="3 2 5 1" />
      <path d="M1478 703l20-12 4 5-20 12z" fill="#22ea34" />
      <path d="M1492 716v26M1494 716v26M1510 700v42M1513 700v42M1488 716h10M1506 708h12" stroke="#47666a" strokeWidth="2" />
      <path d="M1423 656h36v5h-36zM1432 662h15v4h-15z" fill="#fff" />
      <g stroke="#18e02c" strokeWidth="3" strokeDasharray="5 1 3 1">
        <path d="M1512 648h24M1514 652h22M1517 657h19" />
      </g>
      <path d="M1520 715h10M1520 728h5M1520 742h10" stroke="#d88a50" strokeWidth="1.500" />
      <path d="M1522 720h4v4h-4zM1527 726h4v4h-4zM1522 734h4v4h-4z" fill="#f8f0b0" />
    </g>
  );
}

const PANELS: [string, ReactNode][] = [
  [
    "Draw",
    <g key="d" fill="none">
      <circle cx="20" cy="20" r="18.500" fill="#eef0f4" stroke="#8c8c90" strokeWidth="1.500" />
      <path d="M22 18L33 7M17.500 17.500h5v5h-5z" stroke="#707880" />
    </g>,
  ],
  ["Modify", <path key="m" d="M16 16h6v6h-6z" fill="#999" stroke="#666" strokeWidth="2" />],
  [
    "Layers",
    <g key="l" fill="#fff" stroke="#7b8490" strokeWidth="1.300">
      <path d="M1 25l8-9h18l-8 9zM1 18l8-8h18l-8 8zM1 11l8-9h18l-8 9z" />
      <path d="M23 16h16v22H23z" fill="#e9eff7" />
      <path d="M26 19h7v7h-7z" fill="#3f6fae" />
      <path d="M35 20h2M35 24h2M26 30h10M26 34h10" />
    </g>,
  ],
  [
    "Annotat...",
    <text key="a" x="20" y="38" textAnchor="middle" fontSize="50" fill="#58585c">
      A
    </text>,
  ],
  [
    "Block",
    <g key="b" fill="none">
      <path d="M10 12l13-5 15 17-13 14L9 20z" fill="#eef2f8" stroke="#8894a4" strokeWidth="1.300" />
      <circle cx="14" cy="14" r="2" fill="#666" />
      <path d="M14 14C4 16 1 10 2 4" stroke="#666c74" strokeWidth="2" />
      <path d="M20 24l2-6L34 8l4 4-12 11z" fill="#f0c55a" stroke="#a08040" />
      <path d="M24 30l3 3M28 28l2 2" stroke="#889" />
    </g>,
  ],
  [
    "Properties",
    <g key="p">
      <path d="M20 20V1A19 19 0 0 1 36.500 10.500z" fill="#f8ec62" />
      <path d="M20 20L36.500 10.500A19 19 0 0 1 39 22z" fill="#f2923c" />
      <path d="M20 20L39 21A19 19 0 0 1 29.500 36.500z" fill="#e2493e" />
      <path d="M20 20L29.500 36.500A19 19 0 0 1 10.500 36.500z" fill="#9a5fd0" />
      <path d="M20 20L10.500 36.500A19 19 0 0 1 1 20z" fill="#3f62c4" />
      <path d="M20 20H1A19 19 0 0 1 8 5z" fill="#58b8d8" />
      <path d="M20 20L4 10A19 19 0 0 1 20 1z" fill="#86d66a" />
      <circle cx="20" cy="20" r="19" fill="none" stroke="#98909a" />
    </g>,
  ],
  [
    "Groups",
    <g key="g" fill="none">
      <path d="M1 2h38v36H1z" stroke="#556" strokeDasharray="3 2" />
      <path d="M5 6h16v12H5z" fill="#ecd848" stroke="#555" />
      <circle cx="12" cy="29" r="7" stroke="#555" strokeWidth="1.500" />
    </g>,
  ],
];

function Cad() {
  return (
    <aside className="flex min-w-0 flex-col overflow-hidden border-l-2 border-[#6c7078] bg-[#858789]">
      <div className="relative flex h-[34px] shrink-0 flex-col bg-white">
        <div className="h-[11px]" />
        <nav className="flex h-[23px] items-end bg-[#5e5e60] pl-[55px] text-sm text-[#eee]">
          <button className="h-[21px] w-[64px] shrink-0 bg-[#f1f1f2] leading-5 text-[#6c6c70]">Home</button>
          {["Insert", "Annotate", "Layout", "Parametric", "View"].map((t) => (
            <button key={t} className="mx-1 shrink-0 px-2 leading-5">
              {t}
            </button>
          ))}
        </nav>
        <button
          aria-label="Menú"
          className="absolute left-0 top-0 flex h-[19px] w-[38px] border-b border-[#666] bg-linear-to-b from-[#b4b4b6] to-[#8c8c8e]"
        >
          <svg width="38" height="18" viewBox="0 0 38 18">
            <path d="M2 12L6 0h13l5 10-7 2-2-4-6 3-1 4z" fill="#d3202c" />
            <path d="M8 1l9-1 3 5-8-1z" fill="#f0606a" />
          </svg>
        </button>
      </div>
      <div className="flex h-[124px] shrink-0 overflow-hidden border-b border-[#a5a5a5] bg-linear-to-b from-white to-[#ededee]">
        {PANELS.map(([label, icon]) => (
          <button
            key={label}
            className="flex w-[76px] shrink-0 flex-col items-center border-r-2 border-[#bcbcc0] pt-1.5 text-sm text-[#7e7e82]"
          >
            <svg width="40" height="40" viewBox="0 0 40 40">
              {icon}
            </svg>
            <span className="mt-1.5 leading-5">{label}</span>
            <svg className="mb-1.5 mt-auto" width="9" height="5" viewBox="0 0 9 5">
              <path d="M0 0h9L4.500 5z" fill="#4c4c50" />
            </svg>
          </button>
        ))}
      </div>
      <div className="ml-0.5 mt-2 flex min-h-0 flex-1 flex-col rounded-tl-lg border-l border-t border-[#e4ecf6] bg-[#c6d8ee]">
        <header className="flex h-[39px] shrink-0 items-center gap-1 rounded-tl-lg bg-linear-to-b from-[#a6c0de] to-[#bcd4f0] pl-2.5 pt-2 text-sm text-[#34485e]">
          <svg width="20" height="20" viewBox="0 0 20 20">
            <path d="M2 2h9l7 4v10H6z" fill="#49698c" />
            <path d="M3 1h5v6H3z" fill="#dce8f0" />
            <path d="M1 12l9-3 8 6v4H1z" fill="#ffe32c" />
          </svg>
          <h1 className="whitespace-nowrap">PLANOS SAN PEDRO DE CHOPCCA.dwg</h1>
        </header>
        <div className="relative ml-[9px] min-h-0 flex-1 overflow-hidden bg-[#3b4552]">
          <svg
            width="469"
            height="593"
            viewBox="1067 206 469 593"
            className="font-['Liberation_Sans']"
            role="img"
            aria-label="Planta albergue comunal"
          >
            <text x="1072" y="223" fontSize="12" fill="#c6ccd2">
              [−][Top][2D Wireframe]
            </text>
            <Plan />
            <Details />
          </svg>
        </div>
      </div>
    </aside>
  );
}

export default function App() {
  return (
    <div className="grid h-screen grid-cols-[1053fr_483fr] overflow-hidden border-b border-black bg-white font-['Noto_Sans',sans-serif]">
      <Excel />
      <Cad />
    </div>
  );
}
